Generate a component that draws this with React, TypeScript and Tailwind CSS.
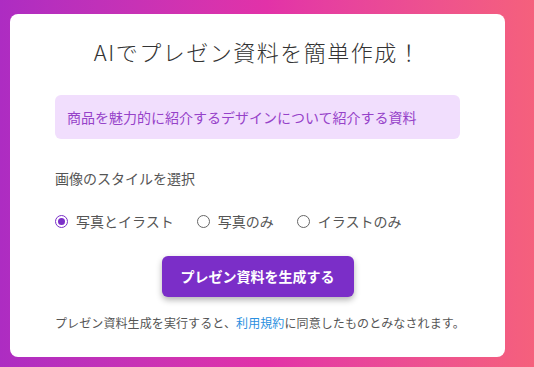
import React, { useState } from 'react';

const options = ['写真とイラスト', '写真のみ', 'イラストのみ'];

function Radio({ checked }: { checked: boolean }) {
  return (
    <span
      className={
        'flex h-[13px] w-[13px] items-center justify-center rounded-full border ' +
        (checked ? 'border-[#7b2fc8]' : 'border-[#666]')
      }
    >
      {checked && <span className="h-[7px] w-[7px] rounded-full bg-[#7b2fc8]" />}
    </span>
  );
}

export default function App() {
  const [style, setStyle] = useState(0);

  return (
    <div
      className="h-[367px] w-[534px] bg-gradient-to-r from-[#ad2cc2] via-[#e232a8] to-[#f5607c] pl-[10px] pr-[29px] pt-[14px] pb-[10px]"
      style={{ fontFamily: '"Noto Sans CJK JP", "Noto Sans", sans-serif' }}
    >
      <div className="flex h-full flex-col rounded-lg bg-white px-[45px] pt-[21px]">
        <h1 className="text-center text-[22px] font-light leading-[32px] tracking-[1.5px] text-[#333]">
          AIでプレゼン資料を簡単作成！
        </h1>

        <div className="mt-[28px] flex h-[44px] items-center rounded-md bg-[#f1defd] px-[12px] text-[14px] text-[#9642c9]">
          商品を魅力的に紹介するデザインについて紹介する資料
        </div>

        <p className="mt-[29px] text-[14px] text-[#555]">画像のスタイルを選択</p>

        <div className="mt-[22px] flex items-center gap-[23px] text-[14px] text-[#555]">
          {options.map((o, i) => (
            <label
              key={o}
              className="flex cursor-pointer items-center gap-[8px]"
              onClick={() => setStyle(i)}
            >
              <Radio checked={style === i} />
              <span>{o}</span>
            </label>
          ))}
        </div>

        <div className="mt-[24px] flex justify-center">
          <button className="h-[41px] w-[192px] rounded-md bg-[#7b2ec8] text-[14px] font-bold text-white shadow-[0_3px_6px_rgba(0,0,0,0.3)]">
            プレゼン資料を生成する
          </button>
        </div>

        <p className="mt-[17px] whitespace-nowrap text-[12px] tracking-[0.1px] text-[#555]">
          プレゼン資料生成を実行すると、
          <a className="text-[#2b8fe0]">利用規約</a>
          に同意したものとみなされます。
        </p>
      </div>
    </div>
  );
}
